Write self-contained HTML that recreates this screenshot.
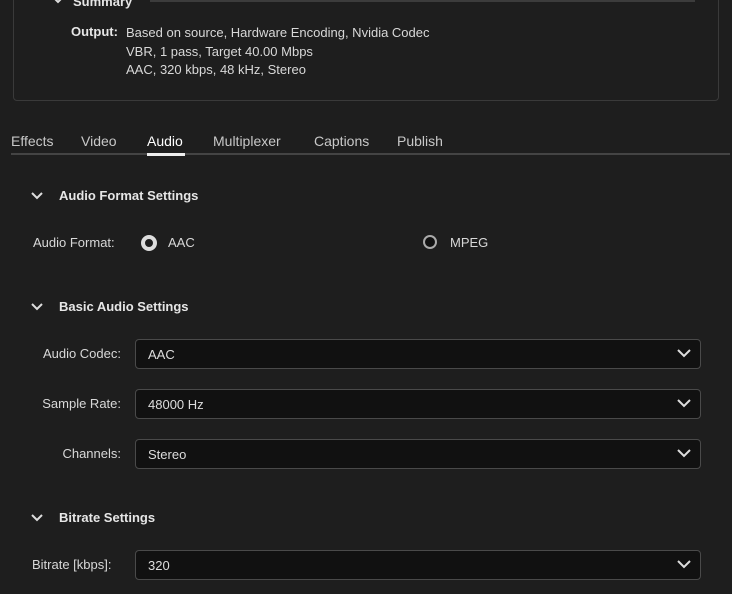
<!DOCTYPE html>
<html><head><style>
body{margin:0;width:732px;height:594px;background:#1e1e1e;font-family:"Liberation Sans",sans-serif;color:#d8d8d8;position:relative;overflow:hidden;font-size:13px}
.a{position:absolute;white-space:nowrap}
.box{position:absolute;left:13px;top:-10px;width:704px;height:109px;border:1px solid #3a3a3a;border-radius:4px}
.dd{position:absolute;left:135px;width:564px;height:28px;background:#111;border:1px solid #4a4a4a;border-radius:4px}
.dd span{position:absolute;left:12px;top:7px;color:#ddd}
.dd svg{position:absolute;right:9px;top:9px}
.lbl{position:absolute;text-align:right;width:121px;left:0}
.h{font-weight:bold;color:#e6e6e6}
</style></head><body>
<div class="box"></div>
<div class="a" style="left:150px;top:0;width:545px;height:2px;background:#3c3c3c"></div>
<svg class="a" style="left:52px;top:-4px" width="12" height="8"><path d="M1 1l5 5 5-5" stroke="#ddd" stroke-width="2" fill="none"/></svg>
<div class="a h" style="left:73px;top:-6px">Summary</div>
<div class="a h" style="left:71px;top:24px">Output:</div>
<div class="a" style="left:126px;top:24px;line-height:18.5px">Based on source, Hardware Encoding, Nvidia Codec<br>VBR, 1 pass, Target 40.00 Mbps<br>AAC, 320 kbps, 48 kHz, Stereo</div>
<div class="a" style="left:11px;top:133px;font-size:14px;color:#c8c8c8">Effects</div>
<div class="a" style="left:81px;top:133px;font-size:14px;color:#c8c8c8">Video</div>
<div class="a" style="left:147px;top:133px;font-size:14px;color:#fff">Audio</div>
<div class="a" style="left:213px;top:133px;font-size:14px;color:#c8c8c8">Multiplexer</div>
<div class="a" style="left:314px;top:133px;font-size:14px;color:#c8c8c8">Captions</div>
<div class="a" style="left:397px;top:133px;font-size:14px;color:#c8c8c8">Publish</div>
<div class="a" style="left:11px;top:153px;width:719px;height:2px;background:#444"></div>
<div class="a" style="left:147px;top:153px;width:38px;height:3px;background:#eee"></div>

<svg class="a" style="left:31px;top:192px" width="12" height="8"><path d="M1 1l5 5 5-5" stroke="#ddd" stroke-width="2" fill="none"/></svg>
<div class="a h" style="left:59px;top:188px">Audio Format Settings</div>
<div class="a" style="left:33px;top:235px">Audio Format:</div>
<div class="a" style="left:141px;top:235px;width:8px;height:8px;border-radius:50%;border:4px solid #ddd;background:#1e1e1e"></div>
<div class="a" style="left:168px;top:235px">AAC</div>
<div class="a" style="left:423px;top:235px;width:10px;height:10px;border-radius:50%;border:2px solid #aaa;background:#111"></div>
<div class="a" style="left:450px;top:235px">MPEG</div>

<svg class="a" style="left:31px;top:303px" width="12" height="8"><path d="M1 1l5 5 5-5" stroke="#ddd" stroke-width="2" fill="none"/></svg>
<div class="a h" style="left:59px;top:299px">Basic Audio Settings</div>
<div class="lbl" style="top:346px">Audio Codec:</div>
<div class="dd" style="top:339px"><span>AAC</span><svg width="14" height="9"><path d="M1 1l6 6 6-6" stroke="#ddd" stroke-width="2" fill="none"/></svg></div>
<div class="lbl" style="top:396px">Sample Rate:</div>
<div class="dd" style="top:389px"><span>48000 Hz</span><svg width="14" height="9"><path d="M1 1l6 6 6-6" stroke="#ddd" stroke-width="2" fill="none"/></svg></div>
<div class="lbl" style="top:446px">Channels:</div>
<div class="dd" style="top:439px"><span>Stereo</span><svg width="14" height="9"><path d="M1 1l6 6 6-6" stroke="#ddd" stroke-width="2" fill="none"/></svg></div>

<svg class="a" style="left:31px;top:514px" width="12" height="8"><path d="M1 1l5 5 5-5" stroke="#ddd" stroke-width="2" fill="none"/></svg>
<div class="a h" style="left:59px;top:510px">Bitrate Settings</div>
<div class="a" style="left:32px;top:557px">Bitrate [kbps]:</div>
<div class="dd" style="top:550px"><span>320</span><svg width="14" height="9"><path d="M1 1l6 6 6-6" stroke="#ddd" stroke-width="2" fill="none"/></svg></div>
</body></html>
